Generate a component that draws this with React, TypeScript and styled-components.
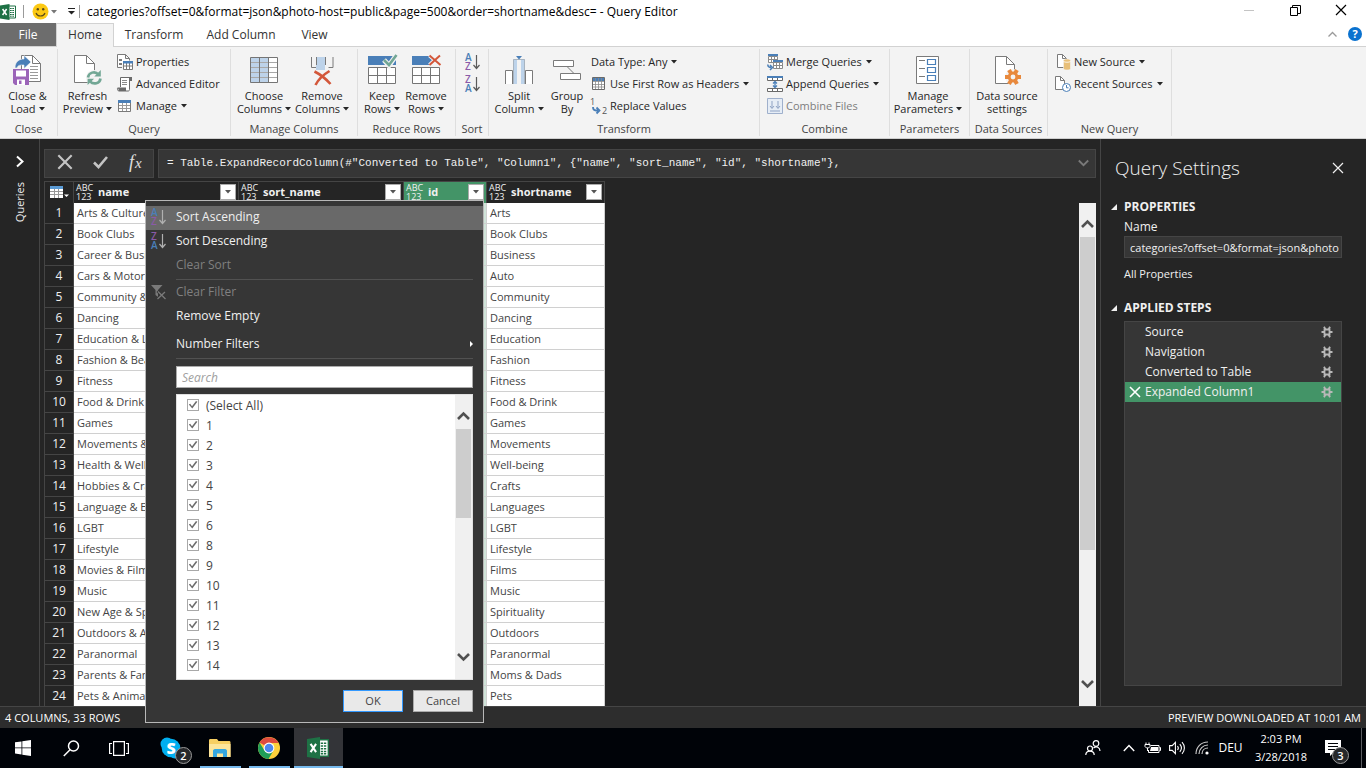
import React from "react";
import styled, { createGlobalStyle, css } from "styled-components";

const green = "#439467";
const line = "#454545";

const Global = createGlobalStyle`
  * { box-sizing: border-box; }
  html, body, #root { height: 100%; }
  body {
    margin: 0;
    background: #252525;
    overflow: hidden;
    font: 11px/16px "Open Sans", "Noto Sans", sans-serif;
    color: #262626;
  }
  button, input { font: inherit; color: inherit; }
  button { background: none; border: 0; padding: 0; white-space: nowrap; }
  svg { display: block; flex: none; overflow: visible; }
`;

/* ---------- window frame ---------- */

const Window = styled.div`
  display: flex;
  flex-direction: column;
  height: 100vh;
`;

const TitleBar = styled.header`
  display: flex;
  align-items: center;
  height: 23px;
  flex: none;
  padding-right: 2px;
  background: #fff;
  color: #000;
`;

const TitleMark = styled.span`
  width: 1px;
  height: 13px;
  background: #9a9a9a;
`;

const QuickButton = styled.button<{ $w: number }>`
  display: flex;
  align-items: center;
  justify-content: center;
  gap: 2px;
  width: ${(p) => p.$w}px;
  height: 22px;
`;

const ProgramButton = styled(QuickButton)`
  justify-content: flex-start;
`;

const Title = styled.h1`
  flex: 1;
  margin: 0 0 0 7px;
  font-size: 12px;
  line-height: 22px;
  font-weight: 400;
`;

const CaptionButton = styled.button`
  display: flex;
  align-items: center;
  justify-content: center;
  width: 46px;
  height: 20px;
  align-self: flex-start;
`;

const TabBar = styled.nav`
  display: flex;
  align-items: stretch;
  height: 24px;
  flex: none;
  background: #fff;
  border-bottom: 1px solid #d2d2d2;
`;

const Tab = styled.button<{ $w: number; $kind?: "file" | "active" }>`
  width: ${(p) => p.$w}px;
  font-size: 12px;
  color: #333;
  ${(p) => p.$kind === "file" && css`background: #6d6d6d; color: #fff;`}
  ${(p) =>
    p.$kind === "active" &&
    css`
      background: #f3f3f3;
      border: 1px solid #d2d2d2;
      border-bottom: 0;
      margin-bottom: -1px;
      padding-bottom: 2px;
    `}
`;

const TabEnd = styled.div`
  display: flex;
  align-items: center;
  gap: 11px;
  margin-left: auto;
  padding: 0 4px 2px 0;
`;

/* ---------- ribbon ---------- */

const Ribbon = styled.div`
  display: flex;
  height: 92px;
  flex: none;
  padding: 2px 0;
  background: #f3f3f3;
  border-bottom: 1px solid #cfcfcf;
`;

const Group = styled.section<{ $w: number }>`
  display: flex;
  flex-direction: column;
  width: ${(p) => p.$w}px;
  border-right: 1px solid #dedede;
`;

const GroupBody = styled.div<{ $pad: number }>`
  display: flex;
  flex: 1;
  padding-left: ${(p) => p.$pad}px;
`;

const GroupName = styled.h2`
  margin: 0;
  font-size: 11px;
  line-height: 14px;
  font-weight: 400;
  text-align: center;
  white-space: nowrap;
  color: #444;
`;

const BigButton = styled.button<{ $w: number }>`
  display: flex;
  flex-direction: column;
  align-items: center;
  width: ${(p) => p.$w}px;
  padding-top: 5px;
  line-height: 13px;
  & > svg { margin-bottom: 3px; }
`;

const ButtonLine = styled.span`
  display: flex;
  align-items: center;
  gap: 3px;
`;

const SmallStack = styled.div`
  display: flex;
  flex-direction: column;
  padding-top: 2px;
`;

const SmallButton = styled.button`
  display: flex;
  align-items: center;
  gap: 4px;
  height: 22px;
  & > svg:first-child { margin-right: -1px; }
  &:disabled { color: #7d7d7d; }
`;

const SortStack = styled(SmallStack)`
  flex: 1;
  align-items: center;
`;

const Caret = ({ color = "#262626" }: { color?: string }) => (
  <svg width="6" height="4" viewBox="0 0 6 4"><path d="M0 0h6L3 3.600z" fill={color} /></svg>
);

/* ---------- workspace ---------- */

const Workspace = styled.main`
  display: flex;
  flex: 1;
  min-height: 0;
  background: #252525;
  color: #f0f0f0;
`;

const QueriesRail = styled.aside`
  display: flex;
  flex-direction: column;
  align-items: center;
  width: 40px;
  padding-top: 16px;
  border-right: 1px solid ${line};
`;

const RailLabel = styled.span`
  margin-top: 14px;
  font-size: 11px;
  line-height: 16px;
  writing-mode: vertical-rl;
  transform: rotate(180deg);
`;

const Center = styled.div`
  display: flex;
  flex-direction: column;
  flex: 1;
  min-width: 0;
  padding: 10px 4px 0;
`;

const FormulaRow = styled.div`
  display: flex;
  gap: 4px;
  height: 29px;
  margin-bottom: 3px;
  flex: none;
`;

const FormulaTools = styled.div`
  display: flex;
  align-items: center;
  justify-content: space-around;
  width: 110px;
  padding: 0 0 3px 2px;
  background: #363636;
  border: 1px solid ${line};
`;

const FormulaBox = styled.div`
  display: flex;
  align-items: center;
  flex: 1;
  background: #363636;
  border: 1px solid ${line};
  padding: 0 6px 2px 0;
`;

const FormulaInput = styled.input`
  flex: 1;
  min-width: 0;
  padding: 0 8px;
  border: 0;
  outline: 0;
  background: none;
  font: 11px/16px "Liberation Mono", monospace;
`;

const GridArea = styled.div`
  display: flex;
  position: relative;
  flex: 1;
  min-height: 0;
`;

const GridClip = styled.div`
  flex: 1;
  overflow: hidden;
`;

const Table = styled.table`
  table-layout: fixed;
  width: 561px;
  border-collapse: separate;
  border-spacing: 0;
  border-left: 1px solid ${line};
  tr { height: 21px; }
  td, th { padding: 0; overflow: hidden; white-space: nowrap; }
`;

const ColumnHead = styled.th<{ $active?: boolean }>`
  height: 22px;
  border-top: 1px solid ${line};
  border-right: 1px solid ${line};
  background: ${(p) => (p.$active ? green : "#252525")};
  text-align: left;
  font-size: 11px;
  font-weight: 700;
`;

const HeadInner = styled.div`
  display: flex;
  align-items: center;
  gap: 5px;
  height: 20px;
  margin-bottom: 1px;
  padding: 0 2px;
`;

const TypeMark = styled.span`
  width: 17px;
  font-size: 9px;
  line-height: 9px;
  font-weight: 400;
`;

const FilterButton = styled.button`
  display: flex;
  align-items: center;
  justify-content: center;
  width: 16px;
  height: 16px;
  margin-left: auto;
  background: #fff;
  border: 1px solid #ababab;
`;

const RowHead = styled.th`
  height: 21px;
  border-right: 1px solid ${line};
  border-bottom: 1px solid ${line};
  font-size: 12px;
  line-height: 20px;
  font-weight: 400;
`;

const Cell = styled.td<{ $active?: boolean }>`
  height: 21px;
  border-right: 1px solid #d0d0d0;
  border-bottom: 1px solid #d0d0d0;
  background: ${(p) => (p.$active ? "#d0e4d9" : "#fff")};
  color: #444;
  line-height: 20px;
  && { padding-left: 3px; }
`;

/* ---------- scroll bar ---------- */

const Track = styled.div<{ $top?: number }>`
  display: flex;
  flex-direction: column;
  width: 17px;
  margin-top: ${(p) => p.$top ?? 0}px;
  background: #f0f0f0;
  flex: none;
`;

const ArrowSlot = styled.button`
  display: flex;
  align-items: center;
  justify-content: center;
  height: 34px;
  padding-top: 8px;
  flex: none;
  &:last-child { padding: 0 0 10px; }
`;

const Lane = styled.div`
  flex: 1;
  padding: 0 1px;
`;

const Thumb = styled.div<{ $part: number }>`
  height: ${(p) => p.$part}%;
  background: #cdcdcd;
`;

const ScrollBar = ({ part, top }: { part: number; top?: number }) => (
  <Track $top={top}>
    <ArrowSlot aria-label="Scroll up">
      <svg width="13" height="10" viewBox="0 0 13 10"><path d="M1 8l5.500-5.500L12 8" fill="none" stroke="#505050" strokeWidth="2.600" /></svg>
    </ArrowSlot>
    <Lane><Thumb $part={part} /></Lane>
    <ArrowSlot aria-label="Scroll down">
      <svg width="13" height="10" viewBox="0 0 13 10"><path d="M1 2l5.500 5.500L12 2" fill="none" stroke="#505050" strokeWidth="2.600" /></svg>
    </ArrowSlot>
  </Track>
);

/* ---------- filter menu ---------- */

const Menu = styled.div`
  position: absolute;
  z-index: 2;
  left: 101px;
  top: 19px;
  width: 339px;
  height: 523px;
  padding-top: 5px;
  background: #363636;
  border: 1px solid #b8b8b8;
`;

const MenuItem = styled.button<{ $hot?: boolean }>`
  display: flex;
  align-items: center;
  width: 100%;
  height: 24px;
  padding: 0 10px 2px 0;
  font-size: 12px;
  background: ${(p) => (p.$hot ? "#696969" : "none")};
  &:disabled { color: #808080; }
`;

const MenuIcon = styled.span`
  display: flex;
  width: 30px;
  padding-left: 5px;
`;

const MenuArrow = styled.svg`
  margin-left: auto;
`;

const MenuRule = styled.div`
  height: 1px;
  margin: 1px 10px 1px 30px;
  background: #515151;
`;

const MenuGap = styled.div`
  height: 4px;
`;

const Panel = styled.div`
  display: flex;
  flex-direction: column;
  gap: 6px;
  padding: 6px 10px 0 30px;
`;

const Search = styled.input`
  height: 22px;
  padding: 0 5px;
  border: 1px solid #ababab;
  border-radius: 0;
  background: #fff;
  font-size: 12px;
  font-style: italic;
  &::placeholder { color: #a0a0a0; }
`;

const ValueBox = styled.div`
  display: flex;
  height: 286px;
  background: #fff;
  border: 1px solid #e0e0e0;
  color: #444;
`;

const Values = styled.ul`
  flex: 1;
  margin: 0;
  padding: 1px 0 0 10px;
  list-style: none;
`;

const ValueLabel = styled.label`
  display: flex;
  align-items: center;
  gap: 7px;
  height: 20px;
  font-size: 12px;
`;

const Check = styled.input`
  appearance: none;
  width: 12px;
  height: 12px;
  margin: 0 0 2px;
  border: 1px solid #a8a8a8;
  background: #fff;
  &:checked::before {
    content: "";
    display: block;
    width: 10px;
    height: 10px;
    background: #6c6c6c;
    clip-path: polygon(8% 46%, 22% 38%, 40% 62%, 80% 10%, 94% 18%, 43% 86%);
  }
`;

const MenuFooter = styled.div`
  display: flex;
  justify-content: flex-end;
  gap: 10px;
  padding-top: 4px;
`;

const DialogButton = styled.button<{ $primary?: boolean }>`
  width: 60px;
  height: 22px;
  background: #e9e9e9;
  border: 1px solid ${(p) => (p.$primary ? "#3399ff" : "#ababab")};
  color: #444;
`;

/* ---------- query settings ---------- */

const Settings = styled.aside`
  display: flex;
  flex-direction: column;
  width: 266px;
  padding: 14px 24px 20px 10px;
  border-left: 1px solid ${line};
`;

const SettingsHead = styled.div`
  display: flex;
  align-items: center;
  justify-content: space-between;
  height: 30px;
  margin: 0 -2px 16px 0;
  padding-left: 4px;
`;

const SettingsTitle = styled.h2`
  margin: 0;
  font-size: 19px;
  line-height: 30px;
  font-weight: 300;
`;

const SectionTitle = styled.h3`
  display: flex;
  align-items: center;
  gap: 7px;
  margin: 0;
  font-size: 12px;
  line-height: 16px;
`;

const Indent = styled.div`
  display: flex;
  flex-direction: column;
  align-items: flex-start;
  padding-left: 13px;
  margin: 3px 0 18px;
`;

const FieldLabel = styled.label`
  font-size: 12px;
  line-height: 18px;
`;

const NameInput = styled.input`
  width: 100%;
  height: 22px;
  padding: 0 1px 0 5px;
  background: #363636;
  border: 1px solid ${line};
  border-radius: 0;
`;

const PlainLink = styled.a`
  margin-top: 8px;
  color: inherit;
  text-decoration: none;
`;

const Steps = styled.ol`
  flex: 1;
  margin: 5px 0 0 13px;
  padding: 0;
  list-style: none;
  background: #363636;
  border: 1px solid ${line};
`;

const Step = styled.li<{ $on?: boolean }>`
  display: flex;
  align-items: center;
  height: 20px;
  padding: 0 8px 0 4px;
  font-size: 12px;
  background: ${(p) => (p.$on ? green : "none")};
`;

const StepMark = styled.span`
  width: 16px;
`;

const StepName = styled.span`
  flex: 1;
`;

/* ---------- status + task bar ---------- */

const StatusBar = styled.footer`
  display: flex;
  justify-content: space-between;
  height: 22px;
  flex: none;
  padding: 0 5px;
  line-height: 22px;
  background: #2d2d2d;
  border-top: 1px solid ${line};
  color: #fff;
`;

const TaskBar = styled.footer`
  display: flex;
  height: 40px;
  flex: none;
  background: #000308;
  color: #fff;
`;

const TaskGroup = styled.div<{ $slot: number }>`
  display: flex;
  padding-right: ${(p) => (p.$slot === 48 ? 3 : 0)}px;
  & > button { width: ${(p) => p.$slot}px; }
`;

const TaskButton = styled.button<{ $state?: "open" | "active" }>`
  display: flex;
  align-items: center;
  justify-content: center;
  position: relative;
  padding-right: 2px;
  ${(p) => p.$state === "active" && css`background: #333438;`}
  &::after {
    content: "";
    position: absolute;
    left: ${(p) => (p.$state === "active" ? 0 : 4)}px;
    right: ${(p) => (p.$state === "active" ? 0 : 4)}px;
    bottom: 0;
    height: ${(p) => (p.$state ? 2 : 0)}px;
    background: #76b9ed;
  }
`;

const Badge = styled.span<{ $right: number }>`
  position: absolute;
  right: ${(p) => p.$right}px;
  bottom: 4px;
  width: 17px;
  height: 17px;
  border: 1px solid #9a9a9a;
  border-radius: 50%;
  background: #26282b;
  font-size: 11px;
  line-height: 15px;
  font-weight: 600;
  text-align: center;
`;

const Tray = styled.div`
  display: flex;
  align-items: center;
  margin-left: auto;
`;

const TrayButton = styled.button<{ $w: number }>`
  display: flex;
  position: relative;
  align-items: center;
  justify-content: center;
  width: ${(p) => p.$w}px;
  height: 40px;
  font-size: 12px;
`;

const Clock = styled.time`
  width: 72px;
  padding-right: 2px;
  font-size: 11px;
  line-height: 18px;
  text-align: center;
`;

const TrayEdge = styled.span`
  width: 5px;
  height: 40px;
  border-left: 1px solid #5a5c60;
`;

/* ---------- drawings ---------- */

const ExcelIcon = ({ size = 16 }: { size?: number }) => (
  <svg width={size} height={size} viewBox="0 0 16 16">
    <path d="M8 2h7.500v12H8z" fill="#fff" stroke="#1e7145" />
    <path d="M10 4.500h4M10 6.500h4M10 8.500h4M10 10.500h4M10 12.200h4" stroke="#1e7145" />
    <path d="M12 3v10" stroke="#fff" strokeWidth=".6" />
    <path d="M0 1.500L9.500 0v16L0 14.500z" fill="#1e7145" />
    <path d="M2.600 5l4 6M6.600 5l-4 6" stroke="#fff" strokeWidth="1.500" />
  </svg>
);

const Page = ({ x = 0, y = 0, w = 21, h = 28, fold = 8 }: { x?: number; y?: number; w?: number; h?: number; fold?: number }) => (
  <g fill="#fff" stroke="#7a7a7a">
    <path d={`M${x + 0.5} ${y + 0.5}h${w - fold}l${fold} ${fold}v${h - fold}h${-w}z`} />
    <path d={`M${x + 0.5 + w - fold} ${y + 0.5}v${fold}h${fold}`} fill="none" />
  </g>
);

const CloseLoadIcon = () => (
  <svg width="30" height="32" viewBox="0 0 30 32">
    <Page x={8} y={1} w={19} h={26} />
    <path d="M17 12.500h8M17 15.500h8M17 18.500h8M17 21.500h8M17 24.500h8" stroke="#9a9a9a" />
    <path d="M2 14C2 7 7 5 11 5V1.500L18 8l-7 6.500V11c-4 0-6 0-7 3z" fill="#4a7fb8" stroke="#f3f3f3" strokeWidth=".6" />
    <path d="M0 15h16v16H2l-2-2z" fill="#9b64b8" />
    <path d="M3 16.500h10v6H3zM4 25.500h8V31H4z" fill="#fff" />
    <path d="M6 26.500h2.500V30H6z" fill="#9b64b8" />
  </svg>
);

const RefreshIcon = () => (
  <svg width="30" height="32" viewBox="0 0 30 32">
    <Page x={1} y={1} w={20} h={27} />
    <circle cx="21" cy="24" r="8" fill="#f3f3f3" />
    <g fill="none" stroke="#72a795" strokeWidth="2.600">
      <path d="M15 23.500c.5-5 7-7 10.500-3" />
      <path d="M27.500 24.500c-.5 5-7 6.500-10.500 2.800" />
      <path d="M27.800 16v6.500h-6.500zM14.600 31v-6.300h6.500z" fill="#72a795" stroke="none" />
    </g>
  </svg>
);

const ChooseColumnsIcon = () => (
  <svg width="30" height="32" viewBox="0 0 30 32">
    <path d="M1.500 3.500h27v25h-27z" fill="#fff" />
    <path d="M1.500 3.500h18v25h-18z" fill="#bdd3ea" />
    <path d="M1.500 8.500h27M1.500 13.500h27M1.500 18.500h27M1.500 23.500h27" stroke="#a8a8a8" />
    <path d="M1.500 3.500h27v25h-27zM10.500 3.500v25M19.500 3.500v25" fill="none" stroke="#757575" />
  </svg>
);

const RemoveColumnsIcon = () => (
  <svg width="30" height="32" viewBox="0 0 30 32">
    <path d="M9 3h9v13H9z" fill="#bdd3ea" />
    <path d="M4.500 3v10.500H9M26 3v10.500h-4.500M9.500 3v8M18.500 3v8" fill="none" stroke="#7a7a7a" />
    <path d="M7.500 17.500c6 3 12 8 16 12.500M22.500 17c-5 3-11 8-14 14" stroke="#d3573a" strokeWidth="2.600" fill="none" />
  </svg>
);

const RowsIcon = ({ keep }: { keep?: boolean }) => (
  <svg width="30" height="32" viewBox="0 0 30 32">
    <path d={keep ? "M1 2h28v9H1z" : "M1 2h18l5 4.500-5 4.500H1z"} fill="#4a7fb8" />
    <path d="M1.500 13.500h27v16h-27zM1.500 21.500h27M10.500 13.500v16M19.500 13.500v16" fill="#fff" stroke="#757575" />
    {keep ? (
      <g fill="none">
        <path d="M17 6l5 5.500L29.500 1" stroke="#f3f3f3" strokeWidth="5" />
        <path d="M17 6l5 5L29.500 1" stroke="#72a795" strokeWidth="2.600" />
      </g>
    ) : (
      <g>
        <path d="M18.500 1.500L29.500 11M29 1.500L18.500 11" stroke="#f3f3f3" strokeWidth="4" />
        <path d="M18.500 1.500L29.500 11M29 1.500L18.500 11" stroke="#d3573a" strokeWidth="2" />
      </g>
    )}
  </svg>
);

const SortIcon = ({ down, dark }: { down?: boolean; dark?: boolean }) => (
  <svg width="15" height="16" viewBox="0 0 15 16" fontFamily="Open Sans, sans-serif" fontSize="10" fontWeight="600">
    <text x="0" y="7" fill={down ? "#8a5aa8" : "#4a7fb8"}>{down ? "Z" : "A"}</text>
    <text x="0" y="15.500" fill={down ? "#4a7fb8" : "#8a5aa8"}>{down ? "A" : "Z"}</text>
    <path d="M11.500 1v13M8.500 11l3 3.500 3-3.500" fill="none" stroke={dark ? "#b0b0b0" : "#5a5a5a"} strokeWidth="1.200" />
  </svg>
);

const SplitIcon = () => (
  <svg width="30" height="32" viewBox="0 0 30 32">
    <path d="M1.500 30V16.500h7V30M21.500 30V16.500h7V30" fill="#fff" stroke="#7a7a7a" />
    <path d="M9 5h5v25H9zM16 5h5v25h-5z" fill="#bdd3ea" />
    <path d="M9.500 30V5.500h11V30" fill="none" stroke="#a8b4c0" />
    <path d="M13 6h4v24h-4z" fill="#f3f3f3" />
    <path d="M12 2h6l-3 3.500z" fill="#4a7fb8" />
  </svg>
);

const GroupByIcon = () => (
  <svg width="30" height="32" viewBox="0 0 30 32">
    <path d="M1.500 6.500h20v6h-20zM8.500 19.500h20v6h-20z" fill="#fff" stroke="#7a7a7a" />
    <path d="M15.500 13l6 6" stroke="#7a7a7a" />
  </svg>
);

const ParametersIcon = () => (
  <svg width="30" height="32" viewBox="0 0 30 32">
    <path d="M3.500 2.500h22v27h-22z" fill="#fff" stroke="#7a7a7a" />
    <path d="M6 6.500h6M6 14.500h6M6 22.500h6" stroke="#7a7a7a" />
    <path d="M14.500 5.500h8v5h-8zM14.500 13.500h8v5h-8zM14.500 21.500h8v5h-8z" fill="none" stroke="#4a7fb8" strokeWidth="1.200" />
  </svg>
);

const DataSourceIcon = () => (
  <svg width="30" height="32" viewBox="0 0 30 32">
    <Page x={3} y={2} w={19} h={27} />
    <circle cx="21" cy="23" r="8" fill="#f3f3f3" />
    <g fill="#e8893d">
      {[0, 60, 120].map((a) => (
        <rect key={a} x="13" y="21" width="16" height="4" transform={`rotate(${a} 21 23)`} />
      ))}
      <circle cx="21" cy="23" r="5.400" />
      <circle cx="21" cy="23" r="2.400" fill="#f3f3f3" />
    </g>
  </svg>
);

const StepCog = () => (
  <svg width="12" height="12" viewBox="0 0 12 12" fill="none" stroke="#b8b8b8">
    <path d="M3.500 3.500h5v5h-5z" strokeWidth="1.800" />
    <path d="M3 .8l1.500 2.700M9 .8L7.500 3.500M3 11.200l1.500-2.700M9 11.200L7.500 8.500M.5 6h3M8.500 6h3" strokeWidth="1.800" />
  </svg>
);

const PropertiesIcon = () => (
  <svg width="16" height="16" viewBox="0 0 16 16">
    <path d="M.5 13.500V.5h8l4 4v2M.5 13.500H5M8.500.5v4h4" fill="#fff" stroke="#7a7a7a" />
    <path d="M2 5h3v2H2zM2 9h3v2H2z" fill="#7a7a7a" />
    <path d="M6.500 8.500h9v7h-9zM6.500 12h9M9.500 8v7M12.500 8v7" fill="#fff" stroke="#7a7a7a" />
    <path d="M6 7h10v2.500H6z" fill="#4a7fb8" />
  </svg>
);

const EditorIcon = () => (
  <svg width="16" height="16" viewBox="0 0 16 16">
    <path d="M3.500 11V1.500h11v3h-2v9c0 1-.5 1.500-1.500 1.500H2c-2 0-1.500-3-1.500-3h8.500" fill="#fff" stroke="#6a6a6a" />
    <path d="M12 1h3v4h-3zM1 12h8v3H2z" fill="#6a6a6a" />
    <path d="M5 4.500h5M5 6.500h5M5 8.500h5" stroke="#8a8a8a" />
  </svg>
);

const TableIcon = () => (
  <svg width="16" height="16" viewBox="0 0 16 16">
    <path d="M1.500 2.500h12v11h-12z" fill="#fff" stroke="#7a7a7a" />
    <path d="M1 2h13v3H1z" fill="#4a7fb8" />
    <path d="M2 7.500h11M2 10.500h11M5.500 5v8M9.500 5v8" stroke="#9a9a9a" />
  </svg>
);

const HeadersIcon = () => (
  <svg width="16" height="16" viewBox="0 0 16 16">
    <path d="M1.500 1.500h12v12h-12z" fill="#fff" stroke="#6a6a6a" />
    <path d="M2 2h11v3H2z" fill="#4a7fb8" />
    <path d="M2 5.500h11M2 8.500h11M2 11h11M4.500 2v11M7.500 2v11M10.500 2v11" stroke="#8a8a8a" strokeWidth=".8" />
  </svg>
);

const ReplaceIcon = () => (
  <svg width="16" height="16" viewBox="0 0 16 16" fontFamily="Open Sans, sans-serif" fontSize="9" fill="#555">
    <text x="-1" y="7">1</text>
    <text x="11" y="16">2</text>
    <path d="M2 9c0 2.500 1 3.500 3 3.500h2M5.500 9.500l3 3-3 3" fill="none" stroke="#4a7fb8" strokeWidth="1.800" />
  </svg>
);

const MergeIcon = () => (
  <svg width="16" height="16" viewBox="0 0 16 16">
    <path d="M1.500 2.500h9v6h-9zM1.500 5.500h9M4.500 2v6M7.500 2v6" fill="#fff" stroke="#8a8a8a" />
    <path d="M1 0h10v2H1z" fill="#4a7fb8" />
    <path d="M6.500 8.500h9v6h-9zM6.500 11.500h9M9.500 8v6M12.500 8v6" fill="#fff" stroke="#8a8a8a" />
    <path d="M6 6h10v2H6z" fill="#4a7fb8" />
    <path d="M.8 10.500c0 2.500 1 3 3.500 3M3 11l2.500 2.500L3 16" fill="none" stroke="#4a7fb8" strokeWidth="1.500" />
  </svg>
);

const AppendIcon = () => (
  <svg width="16" height="16" viewBox="0 0 16 16">
    <path d="M.5 1.500h15v3H.5zM5.500 1v3M10.500 1v3M.5 12.500h15v3H.5zM5.500 12v3M10.500 12v3" fill="#fff" stroke="#6a6a6a" />
    <path d="M0 0h16v2H0z" fill="#4a7fb8" />
    <path d="M8 5v7M6 7.500L8 5.500l2 2M6 9.500l2 2 2-2" fill="none" stroke="#4a7fb8" strokeWidth="1.300" />
  </svg>
);

const CombineIcon = () => (
  <svg width="16" height="16" viewBox="0 0 16 16">
    <path d="M.5.500h15v15H.5z" fill="#e6edf6" stroke="#9fb0cc" />
    <path d="M5 3v7M11 3v7M3 8l2 2.500L7 8M9 8l2 2.500L13 8M3 13h10" fill="none" stroke="#8fa3c4" />
  </svg>
);

const NewSourceIcon = ({ recent }: { recent?: boolean }) => (
  <svg width="16" height="16" viewBox="0 0 16 16">
    <Page x={recent ? 0 : 2} y={0} w={9} h={13} fold={4} />
    {recent ? (
      <g fill="#fff" stroke="#4a7fb8"><circle cx="11.500" cy="11.500" r="4" /><path d="M11.500 9v2.800h2" fill="none" /></g>
    ) : (
      <g><path d="M8.500 6.500c0-2 7-2 7 0v8c0 2-7 2-7 0z" fill="#e8bf78" stroke="#f3f3f3" strokeWidth=".6" /><path d="M8.500 7.500c1.500 1 5.500 1 7 0" stroke="#fff" fill="none" strokeWidth=".8" /></g>
    )}
  </svg>
);

const CrossIcon = ({ size, color, w = 1.2 }: { size: number; color: string; w?: number }) => (
  <svg width={size} height={size} viewBox="0 0 12 12"><path d="M1 1l10 10M11 1L1 11" stroke={color} strokeWidth={w} /></svg>
);

const ChromeIcon = () => (
  <svg width="22" height="22" viewBox="0 0 22 22">
    <circle cx="11" cy="11" r="11" fill="#fdd03b" />
    <path d="M11 11L1.500 5.500A11 11 0 0 1 20.600 6H11z" fill="#dd4b3e" />
    <path d="M1.500 5.500A11 11 0 0 0 10.500 22l5-8.500L11 11 6.500 13.500z" fill="#1f9d58" />
    <circle cx="11" cy="11" r="5.400" fill="#fff" />
    <circle cx="11" cy="11" r="4.300" fill="#4c87ee" />
  </svg>
);

const ExplorerIcon = () => (
  <svg width="22" height="19" viewBox="0 0 22 19">
    <path d="M0 1.500C0 .5.500 0 1.500 0H8l1.500 2H20c1 0 1.500.5 1.500 1.500V18H0z" fill="#f7cf62" />
    <path d="M0 5h21.500v13H0z" fill="#fde59a" />
    <path d="M4 18v-6c0-1 .7-2 2-2h10c1.300 0 2 1 2 2v6h-4v-3.500H8V18z" fill="#35a7e0" />
  </svg>
);

const SkypeIcon = () => (
  <svg width="22" height="22" viewBox="0 0 22 22" fontFamily="Open Sans, sans-serif" fontWeight="800" fontSize="16">
    <circle cx="7" cy="7" r="6.500" fill="#00aff0" />
    <circle cx="15" cy="15" r="6.500" fill="#00aff0" />
    <circle cx="11" cy="11" r="9.300" fill="#00aff0" />
    <text x="11" y="17" textAnchor="middle" fill="#fff">S</text>
  </svg>
);

/* ---------- data ---------- */

const rows: [string, string][] = [
  ["Arts & Culture", "Arts"],
  ["Book Clubs", "Book Clubs"],
  ["Career & Business", "Business"],
  ["Cars & Motorcycles", "Auto"],
  ["Community & Environment", "Community"],
  ["Dancing", "Dancing"],
  ["Education & Learning", "Education"],
  ["Fashion & Beauty", "Fashion"],
  ["Fitness", "Fitness"],
  ["Food & Drink", "Food & Drink"],
  ["Games", "Games"],
  ["Movements & Politics", "Movements"],
  ["Health & Wellbeing", "Well-being"],
  ["Hobbies & Crafts", "Crafts"],
  ["Language & Ethnic Identity", "Languages"],
  ["LGBT", "LGBT"],
  ["Lifestyle", "Lifestyle"],
  ["Movies & Film", "Films"],
  ["Music", "Music"],
  ["New Age & Spirituality", "Spirituality"],
  ["Outdoors & Adventure", "Outdoors"],
  ["Paranormal", "Paranormal"],
  ["Parents & Family", "Moms & Dads"],
  ["Pets & Animals", "Pets"],
];

const columns = ["name", "sort_name", "id", "shortname"];
const values = ["(Select All)", "1", "2", "3", "4", "5", "6", "8", "9", "10", "11", "12", "13", "14"];
const steps = ["Source", "Navigation", "Converted to Table", "Expanded Column1"];

interface BigProps { w: number; icon: React.ReactNode; top: string; bottom: string; caret?: boolean }
const Big = ({ w, icon, top, bottom, caret }: BigProps) => (
  <BigButton $w={w}>
    {icon}
    <span>{top}</span>
    <ButtonLine>{bottom}{caret && <Caret />}</ButtonLine>
  </BigButton>
);

interface SmallProps { icon?: React.ReactNode; text: string; caret?: boolean; disabled?: boolean }
const Small = ({ icon, text, caret, disabled }: SmallProps) => (
  <SmallButton disabled={disabled}>{icon}<span>{text}</span>{caret && <Caret />}</SmallButton>
);

interface RibbonGroupProps { w: number; pad?: number; name: string; children: React.ReactNode }
const RibbonGroup = ({ w, pad = 0, name, children }: RibbonGroupProps) => (
  <Group $w={w}>
    <GroupBody $pad={pad}>{children}</GroupBody>
    <GroupName>{name}</GroupName>
  </Group>
);

const FilterMenu = () => (
  <Menu>
    <MenuItem $hot><MenuIcon><SortIcon dark /></MenuIcon>Sort Ascending</MenuItem>
    <MenuItem><MenuIcon><SortIcon down dark /></MenuIcon>Sort Descending</MenuItem>
    <MenuItem disabled><MenuIcon />Clear Sort</MenuItem>
    <MenuRule />
    <MenuItem disabled>
      <MenuIcon>
        <svg width="16" height="16" viewBox="0 0 16 16">
          <path d="M0 1h11.500L7 6v7l-2.500-2V6z" fill="#7a7a7a" />
          <path d="M6.500 7l8 8M14.500 7l-8 8" stroke="#363636" strokeWidth="3" />
          <path d="M7 7.500l7.500 7.500M14 8l-7.500 7" stroke="#7a7a7a" strokeWidth="1.300" />
        </svg>
      </MenuIcon>
      Clear Filter
    </MenuItem>
    <MenuItem><MenuIcon />Remove Empty</MenuItem>
    <MenuGap />
    <MenuItem>
      <MenuIcon />Number Filters
      <MenuArrow width="3" height="6" viewBox="0 0 3 6"><path d="M0 0l3 3-3 3z" fill="#fff" /></MenuArrow>
    </MenuItem>
    <MenuRule />
    <Panel>
      <Search placeholder="Search" aria-label="Search" />
      <ValueBox>
        <Values>
          {values.map((v) => (
            <li key={v}><ValueLabel><Check type="checkbox" defaultChecked />{v}</ValueLabel></li>
          ))}
        </Values>
        <ScrollBar part={41} />
      </ValueBox>
      <MenuFooter>
        <DialogButton $primary>OK</DialogButton>
        <DialogButton>Cancel</DialogButton>
      </MenuFooter>
    </Panel>
  </Menu>
);

const DataGrid = () => (
  <GridClip>
    <Table>
      <colgroup>
        <col width="29" /><col width="165" /><col width="165" /><col width="83" /><col width="118" />
      </colgroup>
      <thead>
        <tr>
          <ColumnHead aria-label="Table menu">
            <HeadInner>
              <svg width="22" height="14" viewBox="0 0 22 14">
                <path d="M3 1h13v12H3z" fill="#fff" />
                <path d="M3 1h13v3H3z" fill="#5b9bd5" />
                <path d="M3 6.500h13M3 9.500h13M7.500 4v9M11.500 4v9" stroke="#999" />
                <path d="M17 9.500h5L19.500 12z" fill="#fff" />
              </svg>
            </HeadInner>
          </ColumnHead>
          {columns.map((c) => (
            <ColumnHead key={c} $active={c === "id"}>
              <HeadInner>
                <TypeMark>ABC<br />123</TypeMark>
                {c}
                <FilterButton aria-label={`Filter ${c}`}><Caret color="#555" /></FilterButton>
              </HeadInner>
            </ColumnHead>
          ))}
        </tr>
      </thead>
      <tbody>
        {rows.map(([name, short], i) => (
          <tr key={name}>
            <RowHead>{i + 1}</RowHead>
            <Cell>{name}</Cell>
            <Cell />
            <Cell $active />
            <Cell>{short}</Cell>
          </tr>
        ))}
      </tbody>
    </Table>
  </GridClip>
);

const Triangle = () => (
  <svg width="6" height="6" viewBox="0 0 6 6"><path d="M6 0v6H0z" fill="#f0f0f0" /></svg>
);

export default function App() {
  return (
    <Window>
      <Global />
      <TitleBar>
        <ProgramButton $w={23} aria-label="Excel"><ExcelIcon /></ProgramButton>
        <TitleMark />
        <QuickButton $w={40} aria-label="Send feedback">
          <svg width="17" height="17" viewBox="0 0 17 17">
            <circle cx="8.500" cy="8.500" r="8" fill="#fcc914" />
            <circle cx="5.800" cy="6.200" r="1.200" fill="#5a4a1a" /><circle cx="11.200" cy="6.200" r="1.200" fill="#5a4a1a" />
            <path d="M4 10c1.500 4 7.500 4 9 0" fill="none" stroke="#5a4a1a" strokeWidth="1.200" />
          </svg>
          <Caret color="#777" />
        </QuickButton>
        <QuickButton $w={15} aria-label="Customize toolbar">
          <svg width="7" height="7" viewBox="0 0 7 7"><path d="M0 .5h7" stroke="#222" /><path d="M0 3h7L3.500 6.500z" fill="#222" /></svg>
        </QuickButton>
        <TitleMark />
        <Title>categories?offset=0&amp;format=json&amp;photo-host=public&amp;page=500&amp;order=shortname&amp;desc= - Query Editor</Title>
        <CaptionButton aria-label="Minimize"><svg width="10" height="1" viewBox="0 0 10 1"><path d="M0 .5h10" stroke="#c4c4c4" /></svg></CaptionButton>
        <CaptionButton aria-label="Restore">
          <svg width="11" height="11" viewBox="0 0 11 11"><path d="M.5 2.500h7v8h-7zM2.500 2.500v-2h8v8h-3" fill="none" stroke="#000" /></svg>
        </CaptionButton>
        <CaptionButton aria-label="Close"><CrossIcon size={12} color="#000" /></CaptionButton>
      </TitleBar>

      <TabBar>
        <Tab $w={56} $kind="file">File</Tab>
        <Tab $w={58} $kind="active">Home</Tab>
        <Tab $w={80}>Transform</Tab>
        <Tab $w={94}>Add Column</Tab>
        <Tab $w={53}>View</Tab>
        <TabEnd>
          <svg width="9" height="6" viewBox="0 0 9 6"><path d="M.5 5.500l4-4 4 4" fill="none" stroke="#9a9a9a" strokeWidth="1.300" /></svg>
          <svg width="14" height="14" viewBox="0 0 14 14" fontFamily="Open Sans, sans-serif" fontSize="11" fontWeight="700">
            <circle cx="7" cy="7" r="7" fill="#0a72cf" />
            <text x="7" y="11" textAnchor="middle" fill="#fff">?</text>
          </svg>
        </TabEnd>
      </TabBar>

      <Ribbon>
        <RibbonGroup w={58} name="Close">
          <Big w={55} icon={<CloseLoadIcon />} top="Close &" bottom="Load" caret />
        </RibbonGroup>
        <RibbonGroup w={173} name="Query">
          <Big w={59} icon={<RefreshIcon />} top="Refresh" bottom="Preview" caret />
          <SmallStack>
            <Small icon={<PropertiesIcon />} text="Properties" />
            <Small icon={<EditorIcon />} text="Advanced Editor" />
            <Small icon={<TableIcon />} text="Manage" caret />
          </SmallStack>
        </RibbonGroup>
        <RibbonGroup w={127} pad={4} name="Manage Columns">
          <Big w={58} icon={<ChooseColumnsIcon />} top="Choose" bottom="Columns" caret />
          <Big w={58} icon={<RemoveColumnsIcon />} top="Remove" bottom="Columns" caret />
        </RibbonGroup>
        <RibbonGroup w={98} pad={2} name="Reduce Rows">
          <Big w={44} icon={<RowsIcon keep />} top="Keep" bottom="Rows" caret />
          <Big w={44} icon={<RowsIcon />} top="Remove" bottom="Rows" caret />
        </RibbonGroup>
        <RibbonGroup w={33} name="Sort">
          <SortStack>
            <SmallButton aria-label="Sort ascending"><SortIcon /></SmallButton>
            <SmallButton aria-label="Sort descending"><SortIcon down /></SmallButton>
          </SortStack>
        </RibbonGroup>
        <RibbonGroup w={271} pad={3} name="Transform">
          <Big w={54} icon={<SplitIcon />} top="Split" bottom="Column" caret />
          <Big w={42} icon={<GroupByIcon />} top="Group" bottom="By" />
          <GroupBody $pad={3}>
            <SmallStack>
              <Small text="Data Type: Any" caret />
              <Small icon={<HeadersIcon />} text="Use First Row as Headers" caret />
              <Small icon={<ReplaceIcon />} text="Replace Values" />
            </SmallStack>
          </GroupBody>
        </RibbonGroup>
        <RibbonGroup w={130} pad={7} name="Combine">
          <SmallStack>
            <Small icon={<MergeIcon />} text="Merge Queries" caret />
            <Small icon={<AppendIcon />} text="Append Queries" caret />
            <Small icon={<CombineIcon />} text="Combine Files" disabled />
          </SmallStack>
        </RibbonGroup>
        <RibbonGroup w={80} name="Parameters">
          <Big w={76} icon={<ParametersIcon />} top="Manage" bottom="Parameters" caret />
        </RibbonGroup>
        <RibbonGroup w={78} name="Data Sources">
          <Big w={74} icon={<DataSourceIcon />} top="Data source" bottom="settings" />
        </RibbonGroup>
        <RibbonGroup w={124} pad={7} name="New Query">
          <SmallStack>
            <Small icon={<NewSourceIcon />} text="New Source" caret />
            <Small icon={<NewSourceIcon recent />} text="Recent Sources" caret />
          </SmallStack>
        </RibbonGroup>
      </Ribbon>

      <Workspace>
        <QueriesRail>
          <button aria-label="Expand queries">
            <svg width="10" height="13" viewBox="0 0 10 13"><path d="M2 1.500l5.500 5-5.500 5" fill="none" stroke="#fff" strokeWidth="2" /></svg>
          </button>
          <RailLabel>Queries</RailLabel>
        </QueriesRail>

        <Center>
          <FormulaRow>
            <FormulaTools>
              <button aria-label="Cancel"><CrossIcon size={16} color="#c4c4c4" w={1.6} /></button>
              <button aria-label="Commit">
                <svg width="15" height="13" viewBox="0 0 15 13"><path d="M1 6.500l4.500 4.500L14 1" fill="none" stroke="#c4c4c4" strokeWidth="2.600" /></svg>
              </button>
              <button aria-label="Insert function">
                <svg width="15" height="18" viewBox="0 0 15 18" fontFamily="Liberation Serif, serif" fontStyle="italic" fontSize="18" fill="#e0e0e0">
                  <text x="1" y="15">f</text><text x="7" y="15" fontSize="15">x</text>
                </svg>
              </button>
            </FormulaTools>
            <FormulaBox>
              <FormulaInput
                aria-label="Formula"
                defaultValue={'= Table.ExpandRecordColumn(#"Converted to Table", "Column1", {"name", "sort_name", "id", "shortname"},'}
              />
              <svg width="11" height="8" viewBox="0 0 11 8"><path d="M.8 1.500l4.700 4.700 4.700-4.700" fill="none" stroke="#7a7a7a" strokeWidth="1.800" /></svg>
            </FormulaBox>
          </FormulaRow>
          <GridArea>
            <DataGrid />
            <ScrollBar part={72} top={22} />
            <FilterMenu />
          </GridArea>
        </Center>

        <Settings>
          <SettingsHead>
            <SettingsTitle>Query Settings</SettingsTitle>
            <button aria-label="Close settings"><CrossIcon size={12} color="#f0f0f0" /></button>
          </SettingsHead>
          <SectionTitle><Triangle />PROPERTIES</SectionTitle>
          <Indent>
            <FieldLabel htmlFor="query-name">Name</FieldLabel>
            <NameInput id="query-name" defaultValue="categories?offset=0&format=json&photo" />
            <PlainLink href="#properties">All Properties</PlainLink>
          </Indent>
          <SectionTitle><Triangle />APPLIED STEPS</SectionTitle>
          <Steps>
            {steps.map((s, i) => (
              <Step key={s} $on={i === 3}>
                <StepMark>{i === 3 && <CrossIcon size={12} color="#fff" w={1.6} />}</StepMark>
                <StepName>{s}</StepName>
                <StepCog />
              </Step>
            ))}
          </Steps>
        </Settings>
      </Workspace>

      <StatusBar>
        <span>4 COLUMNS, 33 ROWS</span>
        <span>PREVIEW DOWNLOADED AT 10:01 AM</span>
      </StatusBar>

      <TaskBar>
        <TaskGroup $slot={48}>
          <TaskButton aria-label="Start">
            <svg width="16" height="16" viewBox="0 0 16 16" fill="#fff"><path d="M0 2.300l6.500-.9v6.100H0zM7.300 1.200L16 0v7.500H7.300zM0 8.300h6.500v6.200L0 13.600zM7.300 8.300H16V16l-8.700-1.200z" /></svg>
          </TaskButton>
          <TaskButton aria-label="Search">
            <svg width="17" height="17" viewBox="0 0 17 17" fill="none" stroke="#fff" strokeWidth="1.500"><circle cx="10.500" cy="6" r="5" /><path d="M7 9.800L.8 16" /></svg>
          </TaskButton>
          <TaskButton aria-label="Task view">
            <svg width="20" height="15" viewBox="0 0 20 15" fill="none" stroke="#fff" strokeWidth="1.200"><path d="M4.600.6h10.800v13.800H4.600zM3 2.500H.6v10H3M17 2.500h2.400v10H17" /></svg>
          </TaskButton>
        </TaskGroup>
        <TaskGroup $slot={49}>
          <TaskButton aria-label="Skype"><SkypeIcon /><Badge $right={4}>2</Badge></TaskButton>
          <TaskButton $state="open" aria-label="File Explorer"><ExplorerIcon /></TaskButton>
          <TaskButton $state="open" aria-label="Chrome"><ChromeIcon /></TaskButton>
          <TaskButton $state="active" aria-label="Excel"><ExcelIcon size={22} /></TaskButton>
        </TaskGroup>
        <Tray>
          <TrayButton $w={48} aria-label="People">
            <svg width="16" height="16" viewBox="0 0 16 16" fill="none" stroke="#fff" strokeWidth="1.200"><circle cx="11" cy="3.500" r="2.800" /><path d="M8.500 8c3-2.500 6.500-.5 6.500 3" /><circle cx="5" cy="8.500" r="2.500" /><path d="M.8 15c0-5.300 8.400-5.300 8.400 0" /></svg>
          </TrayButton>
          <TrayButton $w={24} aria-label="Hidden icons">
            <svg width="12" height="8" viewBox="0 0 12 8"><path d="M.8 7L6 1.500 11.200 7" fill="none" stroke="#fff" strokeWidth="1.400" /></svg>
          </TrayButton>
          <TrayButton $w={24} aria-label="Battery">
            <svg width="16" height="13" viewBox="0 0 16 13"><path d="M5.500 3.500h8.500v7H3.500V8M14.500 5.500h1v3h-1" fill="none" stroke="#fff" /><path d="M6 5h7v4H5z" fill="#fff" /><path d="M0 2.500h5v2L3.500 6H1.500L0 4.500zM1 .5v2M4 .5v2M2.500 6v3" fill="#000308" stroke="#fff" /></svg>
          </TrayButton>
          <TrayButton $w={24} aria-label="Volume">
            <svg width="17" height="14" viewBox="0 0 17 14" fill="none" stroke="#fff" strokeWidth="1.100"><path d="M.6 4.600h2.600l3.200-3.200v11.200L3.200 9.400H.6zM8.500 5c1 1.200 1 2.800 0 4M10.800 3.200c2 2.300 2 5.300 0 7.600M13 1.200c3.200 3.400 3.200 8.200 0 11.600" /></svg>
          </TrayButton>
          <TrayButton $w={26} aria-label="Network">
            <svg width="14" height="14" viewBox="0 0 14 14" fill="none" stroke="#c8c8c8" strokeWidth="1.200"><path d="M1 13C1 6 6 1 13 1M4 13c0-5 4-9 9-9M7 13c0-3.500 2.500-6 6-6" /><circle cx="12" cy="12" r="1.600" fill="#fff" stroke="none" /></svg>
          </TrayButton>
          <TrayButton $w={31}>DEU</TrayButton>
          <Clock>2:03 PM<br />3/28/2018</Clock>
          <TrayButton $w={43} aria-label="Notifications">
            <svg width="32" height="16" viewBox="0 0 32 16"><path d="M1 0h16v13H9l-3 3v-3H1z" fill="#fff" /><path d="M4 3.500h10M4 6.500h10M4 9.500h7" stroke="#000308" /></svg>
            <Badge $right={12}>3</Badge>
          </TrayButton>
          <TrayEdge />
        </Tray>
      </TaskBar>
    </Window>
  );
}
